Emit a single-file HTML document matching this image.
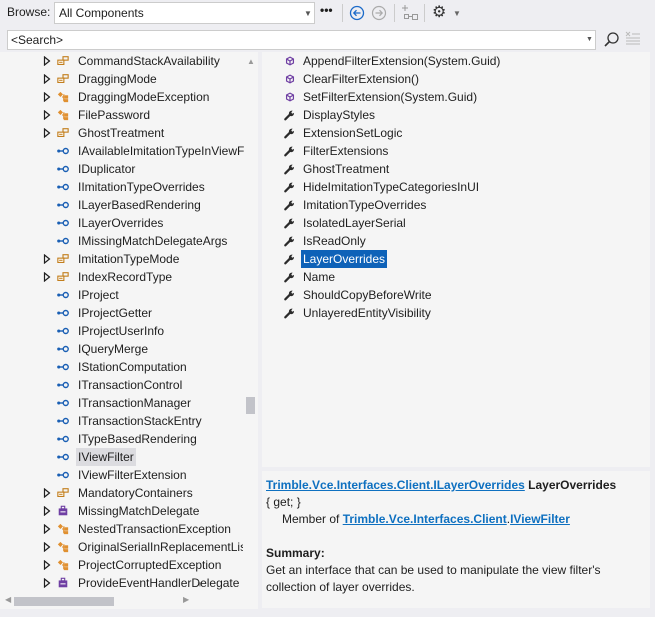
<!DOCTYPE html>
<html><head><meta charset="utf-8"><style>
*{margin:0;padding:0;box-sizing:border-box}
body{width:655px;height:617px;background:#eeeef2;font-family:"Liberation Sans",sans-serif;font-size:12px;color:#1e1e1e;position:relative;overflow:hidden}
.a{position:absolute}
.row{position:absolute;height:18px;line-height:18px;white-space:nowrap}
.ex{position:absolute;left:43px;top:4px}
.ic{position:absolute;left:56px;top:3px;width:14px;height:12px}
.tx{position:absolute;left:78px;top:0}
.rr .ic{left:283px}
.rr .tx{left:303px}
a{color:#0e70c0;font-weight:bold;text-decoration:underline}
</style></head><body>
<svg width="0" height="0" style="position:absolute">
<symbol id="exp" viewBox="0 0 8 10"><path d="M1.5 1 L6.5 5 L1.5 9 Z" fill="none" stroke="#1e1e1e" stroke-width="1.2"/></symbol>
<symbol id="enum" viewBox="0 0 16 14"><rect x="8" y="2" width="6" height="4" fill="none" stroke="#c27d1a" stroke-width="1.3"/><rect x="2" y="6" width="7" height="5" fill="#fff" stroke="#c27d1a" stroke-width="1.3"/><path d="M3.5 8.5h4" stroke="#c27d1a" stroke-width="1.2"/></symbol>
<symbol id="cls" viewBox="0 0 16 14"><path d="M2 4 L5 1 L8 4 L5 7Z" fill="#e09030"/><path d="M7 7h4M9 4v8" stroke="#e09030" stroke-width="1.6"/><rect x="10" y="5" width="4" height="4" fill="#e09030"/><rect x="9" y="9.5" width="5" height="3.5" fill="#e09030"/></symbol>
<symbol id="ifc" viewBox="0 0 18 14"><circle cx="3.5" cy="7" r="2" fill="#1a5fb4"/><path d="M5 7h4" stroke="#1a5fb4" stroke-width="1.8"/><circle cx="12.5" cy="7" r="3.2" fill="none" stroke="#1a5fb4" stroke-width="1.8"/></symbol>
<symbol id="del" viewBox="0 0 16 14"><rect x="3" y="4" width="10" height="8" fill="#6f3fa3"/><rect x="6" y="1.5" width="4" height="3" fill="none" stroke="#6f3fa3" stroke-width="1.3"/><path d="M5 8h6" stroke="#fff" stroke-width="1.2"/></symbol>
<symbol id="mth" viewBox="0 0 16 14"><path d="M8 2.5 L12 4.7 V9.3 L8 11.5 L4 9.3 V4.7Z M4 4.7 L8 7 L12 4.7 M8 7 V11.5" fill="none" stroke="#6f3fa3" stroke-width="1.4"/></symbol>
<symbol id="prp" viewBox="0 0 16 14"><path d="M2.5 12 L8 6.5" stroke="#2b2b2b" stroke-width="2.6" stroke-linecap="round"/><path d="M7 7 C6 4 8 1.5 11 2 L9.5 4 L10.5 5.5 L12.5 4.5 C13 7.5 10.5 9 8 8Z" fill="#2b2b2b"/></symbol>
</svg>

<div class="a" style="left:7px;top:5px;font-size:12px">Browse:</div>
<div class="a" style="left:54px;top:2px;width:261px;height:22px;background:#fff;border:1px solid #ccc;padding:3px 4px;font-size:12px">All Components</div>
<div class="a" style="left:304px;top:9px;font-size:8px;color:#555">▼</div>
<div class="a" style="left:320px;top:3px;font-weight:bold;letter-spacing:0">•••</div>
<div class="a" style="left:342px;top:4px;width:1px;height:18px;background:#ccc"></div>
<svg class="a" style="left:349px;top:5px" width="16" height="16"><circle cx="8" cy="8" r="6.5" fill="none" stroke="#1b6ac9" stroke-width="1.3"/><path d="M11.5 8H5M7.5 5.2L4.8 8L7.5 10.8" fill="none" stroke="#1b6ac9" stroke-width="1.3"/></svg>
<svg class="a" style="left:371px;top:5px" width="16" height="16"><circle cx="8" cy="8" r="6.5" fill="none" stroke="#aaa" stroke-width="1.2"/><path d="M4.5 8H11M8.5 5.2L11.2 8L8.5 10.8" fill="none" stroke="#aaa" stroke-width="1.2"/></svg>
<div class="a" style="left:394px;top:4px;width:1px;height:18px;background:#ccc"></div>
<svg class="a" style="left:402px;top:4px" width="18" height="18"><path d="M3 1v6M0 4h6" stroke="#999"/><rect x="2.5" y="10.5" width="4" height="4" fill="none" stroke="#999"/><rect x="10.5" y="10.5" width="5" height="5" fill="none" stroke="#999"/><path d="M6.5 12.5h4" stroke="#999"/></svg>
<div class="a" style="left:424px;top:4px;width:1px;height:18px;background:#ccc"></div>
<div class="a" style="left:432px;top:2px;font-size:16px;color:#333">⚙</div>
<div class="a" style="left:453px;top:9px;font-size:8px;color:#666">▼</div>

<div class="a" style="left:7px;top:30px;width:589px;height:20px;background:#fff;border:1px solid #ccc;padding:2px 3px">&lt;Search&gt;</div>
<div class="a" style="left:586px;top:36px;font-size:7px;color:#555">▼</div>
<svg class="a" style="left:603px;top:31px" width="18" height="18"><circle cx="10" cy="7" r="5" fill="none" stroke="#333" stroke-width="1.3"/><path d="M6.5 10.5L2 15" stroke="#333" stroke-width="1.6"/></svg>
<svg class="a" style="left:625px;top:31px" width="16" height="16"><path d="M1 1l4 4M5 1l-4 4M7 3h8M1 7h14M1 10h14M1 13h14" stroke="#bbb"/></svg>

<div class="a" style="left:0;top:52px;width:258px;height:557px;background:#f5f5f5"></div>
<div class="a" style="left:262px;top:52px;width:388px;height:415px;background:#f5f5f5"></div>
<div class="a" style="left:262px;top:471px;width:388px;height:137px;background:#f5f5f5"></div>

<div class="a" style="left:247px;top:57px;font-size:8px;color:#999">▲</div>
<div class="a" style="left:246px;top:397px;width:9px;height:17px;background:#c2c3c9"></div>
<div class="a" style="left:196px;top:580px;font-size:8px;color:#999">▼</div>
<div class="a" style="left:5px;top:595px;font-size:8px;color:#999">◀</div>
<div class="a" style="left:14px;top:597px;width:100px;height:9px;background:#c2c3c9"></div>
<div class="a" style="left:183px;top:595px;font-size:8px;color:#999">▶</div>

<div class="row" style="top:52px"><svg class="ex" width="8" height="10"><use href="#exp"/></svg><svg class="ic"><use href="#enum"/></svg><span class="tx">CommandStackAvailability</span></div>
<div class="row" style="top:70px"><svg class="ex" width="8" height="10"><use href="#exp"/></svg><svg class="ic"><use href="#enum"/></svg><span class="tx">DraggingMode</span></div>
<div class="row" style="top:88px"><svg class="ex" width="8" height="10"><use href="#exp"/></svg><svg class="ic"><use href="#cls"/></svg><span class="tx">DraggingModeException</span></div>
<div class="row" style="top:106px"><svg class="ex" width="8" height="10"><use href="#exp"/></svg><svg class="ic"><use href="#cls"/></svg><span class="tx">FilePassword</span></div>
<div class="row" style="top:124px"><svg class="ex" width="8" height="10"><use href="#exp"/></svg><svg class="ic"><use href="#enum"/></svg><span class="tx">GhostTreatment</span></div>
<div class="row" style="top:142px"><svg class="ic"><use href="#ifc"/></svg><span class="tx">IAvailableImitationTypeInViewF</span></div>
<div class="row" style="top:160px"><svg class="ic"><use href="#ifc"/></svg><span class="tx">IDuplicator</span></div>
<div class="row" style="top:178px"><svg class="ic"><use href="#ifc"/></svg><span class="tx">IImitationTypeOverrides</span></div>
<div class="row" style="top:196px"><svg class="ic"><use href="#ifc"/></svg><span class="tx">ILayerBasedRendering</span></div>
<div class="row" style="top:214px"><svg class="ic"><use href="#ifc"/></svg><span class="tx">ILayerOverrides</span></div>
<div class="row" style="top:232px"><svg class="ic"><use href="#ifc"/></svg><span class="tx">IMissingMatchDelegateArgs</span></div>
<div class="row" style="top:250px"><svg class="ex" width="8" height="10"><use href="#exp"/></svg><svg class="ic"><use href="#enum"/></svg><span class="tx">ImitationTypeMode</span></div>
<div class="row" style="top:268px"><svg class="ex" width="8" height="10"><use href="#exp"/></svg><svg class="ic"><use href="#enum"/></svg><span class="tx">IndexRecordType</span></div>
<div class="row" style="top:286px"><svg class="ic"><use href="#ifc"/></svg><span class="tx">IProject</span></div>
<div class="row" style="top:304px"><svg class="ic"><use href="#ifc"/></svg><span class="tx">IProjectGetter</span></div>
<div class="row" style="top:322px"><svg class="ic"><use href="#ifc"/></svg><span class="tx">IProjectUserInfo</span></div>
<div class="row" style="top:340px"><svg class="ic"><use href="#ifc"/></svg><span class="tx">IQueryMerge</span></div>
<div class="row" style="top:358px"><svg class="ic"><use href="#ifc"/></svg><span class="tx">IStationComputation</span></div>
<div class="row" style="top:376px"><svg class="ic"><use href="#ifc"/></svg><span class="tx">ITransactionControl</span></div>
<div class="row" style="top:394px"><svg class="ic"><use href="#ifc"/></svg><span class="tx">ITransactionManager</span></div>
<div class="row" style="top:412px"><svg class="ic"><use href="#ifc"/></svg><span class="tx">ITransactionStackEntry</span></div>
<div class="row" style="top:430px"><svg class="ic"><use href="#ifc"/></svg><span class="tx">ITypeBasedRendering</span></div>
<div class="row" style="top:448px"><svg class="ic"><use href="#ifc"/></svg><span class="tx" style="left:76px;padding:0 2px;background:#dcdce0">IViewFilter</span></div>
<div class="row" style="top:466px"><svg class="ic"><use href="#ifc"/></svg><span class="tx">IViewFilterExtension</span></div>
<div class="row" style="top:484px"><svg class="ex" width="8" height="10"><use href="#exp"/></svg><svg class="ic"><use href="#enum"/></svg><span class="tx">MandatoryContainers</span></div>
<div class="row" style="top:502px"><svg class="ex" width="8" height="10"><use href="#exp"/></svg><svg class="ic"><use href="#del"/></svg><span class="tx">MissingMatchDelegate</span></div>
<div class="row" style="top:520px"><svg class="ex" width="8" height="10"><use href="#exp"/></svg><svg class="ic"><use href="#cls"/></svg><span class="tx">NestedTransactionException</span></div>
<div class="row" style="top:538px;width:243px;overflow:hidden"><svg class="ex" width="8" height="10"><use href="#exp"/></svg><svg class="ic"><use href="#cls"/></svg><span class="tx">OriginalSerialInReplacementList</span></div>
<div class="row" style="top:556px"><svg class="ex" width="8" height="10"><use href="#exp"/></svg><svg class="ic"><use href="#cls"/></svg><span class="tx">ProjectCorruptedException</span></div>
<div class="row" style="top:574px"><svg class="ex" width="8" height="10"><use href="#exp"/></svg><svg class="ic"><use href="#del"/></svg><span class="tx">ProvideEventHandlerDelegate</span></div>

<div class="rr">
<div class="row" style="top:52px"><svg class="ic"><use href="#mth"/></svg><span class="tx">AppendFilterExtension(System.Guid)</span></div>
<div class="row" style="top:70px"><svg class="ic"><use href="#mth"/></svg><span class="tx">ClearFilterExtension()</span></div>
<div class="row" style="top:88px"><svg class="ic"><use href="#mth"/></svg><span class="tx">SetFilterExtension(System.Guid)</span></div>
<div class="row" style="top:106px"><svg class="ic"><use href="#prp"/></svg><span class="tx">DisplayStyles</span></div>
<div class="row" style="top:124px"><svg class="ic"><use href="#prp"/></svg><span class="tx">ExtensionSetLogic</span></div>
<div class="row" style="top:142px"><svg class="ic"><use href="#prp"/></svg><span class="tx">FilterExtensions</span></div>
<div class="row" style="top:160px"><svg class="ic"><use href="#prp"/></svg><span class="tx">GhostTreatment</span></div>
<div class="row" style="top:178px"><svg class="ic"><use href="#prp"/></svg><span class="tx">HideImitationTypeCategoriesInUI</span></div>
<div class="row" style="top:196px"><svg class="ic"><use href="#prp"/></svg><span class="tx">ImitationTypeOverrides</span></div>
<div class="row" style="top:214px"><svg class="ic"><use href="#prp"/></svg><span class="tx">IsolatedLayerSerial</span></div>
<div class="row" style="top:232px"><svg class="ic"><use href="#prp"/></svg><span class="tx">IsReadOnly</span></div>
<div class="row" style="top:250px"><svg class="ic"><use href="#prp"/></svg><span class="tx" style="left:301px;padding:0 2px;background:#0e62b8;color:#fff">LayerOverrides</span></div>
<div class="row" style="top:268px"><svg class="ic"><use href="#prp"/></svg><span class="tx">Name</span></div>
<div class="row" style="top:286px"><svg class="ic"><use href="#prp"/></svg><span class="tx">ShouldCopyBeforeWrite</span></div>
<div class="row" style="top:304px"><svg class="ic"><use href="#prp"/></svg><span class="tx">UnlayeredEntityVisibility</span></div>
</div>

<div class="a" style="left:266px;top:477px;line-height:17px;width:385px">
<div style="white-space:nowrap"><a>Trimble.Vce.Interfaces.Client.ILayerOverrides</a> <b>LayerOverrides</b></div>
<div>{ get; }</div>
<div style="padding-left:16px">Member of <a>Trimble.Vce.Interfaces.Client</a>.<a>IViewFilter</a></div>
<div style="height:17px"></div>
<div><b>Summary:</b></div>
<div>Get an interface that can be used to manipulate the view filter's collection of layer overrides.</div>
</div>
</body></html>
